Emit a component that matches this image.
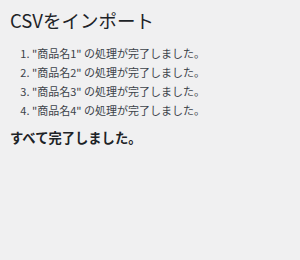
const items = ["商品名1", "商品名2", "商品名3", "商品名4"];

export default function App() {
  return (
    <div
      className="min-h-[260px] w-[300px] bg-[#f0f0f1] pl-[10px] pt-[8px] text-[#3c434a]"
      style={{ fontFamily: '"Noto Sans CJK JP", "Noto Sans", sans-serif' }}
    >
      <h1 className="text-[18.5px] leading-[24px] font-normal text-[#1d2327]">CSVをインポート</h1>
      <ol className="mt-[12px] list-decimal pl-[22px] text-[11px] leading-[19px]">
        {items.map((name) => (
          <li key={name}>"{name}" の処理が完了しました。</li>
        ))}
      </ol>
      <p className="mt-[9px] text-[13.3px] leading-[18px] font-bold text-[#1d2327]">すべて完了しました。</p>
    </div>
  );
}
